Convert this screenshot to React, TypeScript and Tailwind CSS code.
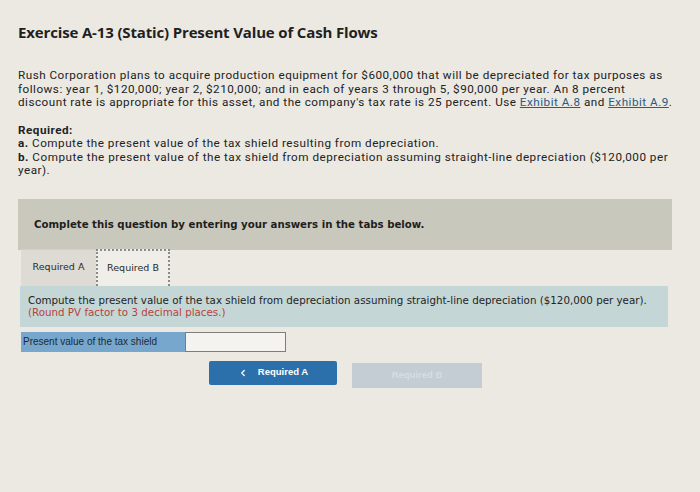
import { ChevronLeft } from "lucide-react";

export default function App() {
  return (
    <div className="w-[700px] h-[492px] overflow-hidden bg-[#ebe9e2] text-[#2a2a2a] font-['Roboto',sans-serif]">
      <div className="pl-[18px] pr-[10px] pt-[22px]">
        {/* Title */}
        <h1 className="font-['Open_Sans',sans-serif] text-[15px] font-bold text-[#1f1f1f] leading-[20px] tracking-[-0.15px]">
          Exercise A-13 (Static) Present Value of Cash Flows
        </h1>

        {/* Problem text */}
        <p className="mt-[27px] text-[11.7px] leading-[13.5px] tracking-[0.5px] text-[#222] whitespace-nowrap">
          Rush Corporation plans to acquire production equipment for $600,000 that will be depreciated for tax purposes as
          <br />
          follows: year 1, $120,000; year 2, $210,000; and in each of years 3 through 5, $90,000 per year. An 8 percent
          <br />
          discount rate is appropriate for this asset, and the company&apos;s tax rate is 25 percent. Use{" "}
          <span className="text-[#2c5a86] underline">Exhibit A.8</span> and{" "}
          <span className="text-[#2c5a86] underline">Exhibit A.9</span>.
        </p>

        <div className="mt-[14px] text-[11.7px] leading-[13.5px] tracking-[0.5px] text-[#222] whitespace-nowrap">
          <div className="font-bold">Required:</div>
          <div>
            <span className="font-bold">a.</span> Compute the present value of the tax shield resulting from depreciation.
          </div>
          <div>
            <span className="font-bold">b.</span> Compute the present value of the tax shield from depreciation assuming straight-line depreciation ($120,000 per
            <br />
            year).
          </div>
        </div>

        {/* Instruction band */}
        <div className="mt-[21px] w-[654px] h-[51px] bg-[#c9c8bd] flex items-center pl-[16px] pt-[2px]">
          <span className="font-['DejaVu_Sans',sans-serif] font-bold text-[10.2px] text-[#1e1e1e]">
            Complete this question by entering your answers in the tabs below.
          </span>
        </div>

        {/* Tabs */}
        <div className="flex mt-[-1px] ml-[3px] h-[37px]">
          <div className="w-[75px] bg-[#dddbd3] flex items-center justify-center font-['DejaVu_Sans',sans-serif] text-[9.5px] text-[#2a2a2a] border-t border-[#d2d0c8]">
            Required A
          </div>
          <div className="w-[74px] bg-[#efeee8] flex items-center justify-center font-['DejaVu_Sans',sans-serif] text-[9.5px] text-[#2a2a2a] border-2 border-dotted border-[#8a8a8a] border-b-0">
            Required B
          </div>
        </div>

        {/* Tab content */}
        <div className="ml-[2px] w-[648px] bg-[#c4d7d6] px-[8px] pt-[8px] pb-[9px] font-['DejaVu_Sans',sans-serif] text-[10.3px] leading-[12px]">
          <div className="text-[#232323] whitespace-nowrap">
            Compute the present value of the tax shield from depreciation assuming straight-line depreciation ($120,000 per year).
          </div>
          <div className="text-[#b8423c]">(Round PV factor to 3 decimal places.)</div>
        </div>

        {/* Answer row */}
        <div className="flex mt-[5px] ml-[3px] h-[20px]">
          <div className="w-[164px] bg-[#77a7cc] flex items-center pl-[2px] font-['Liberation_Sans',sans-serif] text-[10px] text-[#1d2a33]">
            Present value of the tax shield
          </div>
          <div className="w-[101px] bg-[#f4f3ef] border border-[#7d7d7d]" />
        </div>

        {/* Navigation buttons */}
        <div className="flex mt-[9px] ml-[191px] gap-[15px]">
          <div className="w-[128px] h-[24px] bg-[#2b70ab] rounded-[2px] flex items-center justify-center gap-[10px] text-white">
            <ChevronLeft className="w-[10px] h-[10px]" strokeWidth={3} />
            <span className="font-['Liberation_Sans',sans-serif] font-bold text-[9.5px]">Required A</span>
          </div>
          <div className="w-[130px] h-[25px] mt-[2px] bg-[#c3cdd3] flex items-center justify-center">
            <span className="font-['Liberation_Sans',sans-serif] font-bold text-[9.5px] text-[#d6dde2]">Required B</span>
          </div>
        </div>
      </div>
    </div>
  );
}
